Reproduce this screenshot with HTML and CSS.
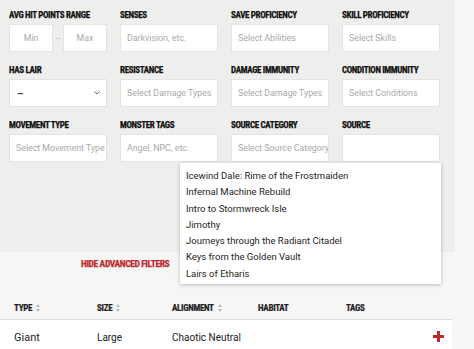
FILE: index.html
```html
<!DOCTYPE html>
<html>
<head>
<meta charset="utf-8">
<link rel="stylesheet" href="styles.css">
</head>
<body>
<div class="page">
  <div class="panel">
    <div class="grid">
      <div class="field">
        <div class="label">AVG HIT POINTS RANGE</div>
        <div class="range">
          <div class="input center ph">Min</div>
          <span class="dash">–</span>
          <div class="input center ph">Max</div>
        </div>
      </div>
      <div class="field">
        <div class="label">SENSES</div>
        <div class="input ph">Darkvision, etc.</div>
      </div>
      <div class="field">
        <div class="label">SAVE PROFICIENCY</div>
        <div class="input ph">Select Abilities</div>
      </div>
      <div class="field">
        <div class="label">SKILL PROFICIENCY</div>
        <div class="input ph">Select Skills</div>
      </div>

      <div class="field">
        <div class="label">HAS LAIR</div>
        <div class="input select"><span class="val">–</span><svg class="chev" width="6" height="4" viewBox="0 0 6 4"><path d="M0.5 0.5 L3 3 L5.5 0.5" fill="none" stroke="#666" stroke-width="1"/></svg></div>
      </div>
      <div class="field">
        <div class="label">RESISTANCE</div>
        <div class="input ph">Select Damage Types</div>
      </div>
      <div class="field">
        <div class="label">DAMAGE IMMUNITY</div>
        <div class="input ph">Select Damage Types</div>
      </div>
      <div class="field">
        <div class="label">CONDITION IMMUNITY</div>
        <div class="input ph">Select Conditions</div>
      </div>

      <div class="field">
        <div class="label">MOVEMENT TYPE</div>
        <div class="input ph">Select Movement Type</div>
      </div>
      <div class="field">
        <div class="label">MONSTER TAGS</div>
        <div class="input ph">Angel, NPC, etc.</div>
      </div>
      <div class="field">
        <div class="label">SOURCE CATEGORY</div>
        <div class="input ph">Select Source Category</div>
      </div>
      <div class="field">
        <div class="label">SOURCE</div>
        <div class="input"></div>
      </div>
    </div>
  </div>

  <div class="toggle">HIDE ADVANCED FILTERS</div>

  <div class="thead">
    <div class="th c1">TYPE <span class="sort"></span></div>
    <div class="th c2">SIZE <span class="sort"></span></div>
    <div class="th c3">ALIGNMENT <span class="sort"></span></div>
    <div class="th c4">HABITAT</div>
    <div class="th c5">TAGS</div>
  </div>
  <div class="row">
    <div class="td c1 big">Giant</div>
    <div class="td c2">Large</div>
    <div class="td c3">Chaotic Neutral</div>
    <div class="td c4"></div>
    <div class="td c5"></div>
    <div class="plus"></div>
  </div>

  <ul class="menu">
    <li>Icewind Dale: Rime of the Frostmaiden</li>
    <li>Infernal Machine Rebuild</li>
    <li>Intro to Stormwreck Isle</li>
    <li>Jimothy</li>
    <li>Journeys through the Radiant Citadel</li>
    <li>Keys from the Golden Vault</li>
    <li>Lairs of Etharis</li>
  </ul>
</div>
</body>
</html>
```
FILE: styles.css
```css
html, body {
  margin: 0;
  padding: 0;
  background: #f6f6f5;
  font-family: Roboto, "Liberation Sans", sans-serif;
  color: #222;
}
.page {
  position: relative;
  width: 474px;
  height: 349px;
  overflow: hidden;
}
.panel {
  width: 455px;
  height: 252px;
  background: #eeeeed;
  box-sizing: border-box;
  padding: 9px 0 0 9px;
}
.grid {
  display: grid;
  grid-template-columns: repeat(4, 98px);
  column-gap: 13px;
  row-gap: 12px;
}
.label {
  font-family: "Roboto Condensed", "DejaVu Sans Condensed", "DejaVu Sans", sans-serif;
  font-stretch: condensed;
  font-weight: bold;
  font-size: 9px;
  line-height: 12px;
  height: 12px;
  color: #111;
  white-space: nowrap;
  letter-spacing: -0.35px;
  margin-bottom: 3px;
  -webkit-text-stroke: 0.25px #111;
}
.input {
  height: 28px;
  box-sizing: border-box;
  background: #fff;
  border: 1px solid #e3e3e2;
  display: flex;
  align-items: center;
  padding: 0 8px 0 6px;
  font-size: 8.8px;
  white-space: nowrap;
  overflow: hidden;
}
.ph { color: #a9a9a9; }
.center { justify-content: center; padding: 0; }
.range {
  display: flex;
  align-items: center;
}
.range .input { width: 45px; }
.dash {
  width: 10px;
  text-align: center;
  color: #d0d0d0;
  font-size: 10px;
}
.select {
  justify-content: space-between;
  color: #444;
  font-size: 10px;
  padding: 0 6px;
}
.select .val { padding-left: 1px; font-weight: bold; }
.toggle {
  font-family: "Roboto Condensed", "DejaVu Sans Condensed", "DejaVu Sans", sans-serif;
  font-stretch: condensed;
  font-weight: bold;
  font-size: 9.5px;
  color: #c1272d;
  padding: 5px 0 0 81px;
  height: 14px;
  line-height: 14px;
  letter-spacing: -0.4px;
  -webkit-text-stroke: 0.25px #c1272d;
}
.thead {
  display: flex;
  margin-top: 26px;
  width: 452px;
  height: 22px;
  border-bottom: 1px solid #dcdcdc;
  align-items: center;
}
.th {
  font-family: "Roboto Condensed", "DejaVu Sans Condensed", "DejaVu Sans", sans-serif;
  font-stretch: condensed;
  font-weight: bold;
  font-size: 9px;
  color: #222;
  letter-spacing: -0.3px;
  -webkit-text-stroke: 0.2px #222;
  display: flex;
  align-items: center;
}
.c1 { width: 83px; padding-left: 14px; }
.c2 { width: 75px; }
.c3 { width: 86px; }
.c4 { width: 88px; }
.c5 { width: 80px; }
.sort {
  display: inline-block;
  position: relative;
  width: 5px;
  height: 8px;
  margin-left: 4px;
}
.sort::before, .sort::after {
  content: "";
  position: absolute;
  left: 0;
  border-left: 2.5px solid transparent;
  border-right: 2.5px solid transparent;
}
.sort::before { top: 0; border-bottom: 3px solid #bbb; }
.sort::after { bottom: 0; border-top: 3px solid #bbb; }
.row {
  display: flex;
  align-items: center;
  width: 452px;
  height: 32px;
  background: #fff;
  position: relative;
  padding-top: 2px;
  box-sizing: border-box;
}
.td { font-size: 10px; color: #222; }
.td.big { font-size: 11px; }
.plus {
  position: absolute;
  right: 8px;
  top: 11px;
  width: 11px;
  height: 11px;
}
.plus::before, .plus::after {
  content: "";
  position: absolute;
  background: #c1272d;
}
.plus::before { left: 4px; top: 0; width: 3px; height: 11px; }
.plus::after { top: 4px; left: 0; width: 11px; height: 3px; }
.menu {
  position: absolute;
  left: 180px;
  top: 163px;
  width: 261px;
  height: 121px;
  margin: 0;
  padding: 5px 0 0 0;
  box-sizing: border-box;
  list-style: none;
  background: #fff;
  box-shadow: 0 1px 4px rgba(0,0,0,0.25);
  font-size: 9.5px;
  color: #1e1e1e;
}
.menu li {
  padding-left: 6px;
  height: 16.3px;
  line-height: 16.3px;
  white-space: nowrap;
}
```
